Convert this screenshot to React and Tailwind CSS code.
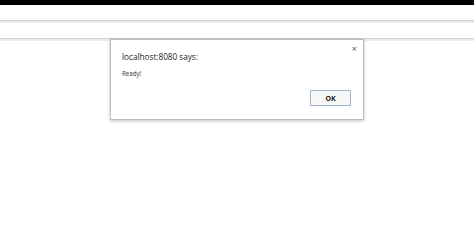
export default function App() {
  return (
    <div className="relative w-[474px] h-[223px] overflow-hidden bg-white" style={{ fontFamily: '"Open Sans", "Noto Sans", sans-serif' }}>
      <div className="h-[5px] bg-black" />
      <div className="mt-[15px] h-[3px] border-t border-[#d0d0d0] bg-[#ececec]" />
      <div className="mt-[15px] h-[3px] border-t border-[#d0d0d0] bg-[#ececec]" />

      <div className="absolute left-[110px] top-[39px] w-[254px] h-[81px] bg-white border border-[#bdbdbd] shadow-[0_1px_3px_rgba(0,0,0,0.25)]">
        <div className="absolute right-[6px] top-[4px] text-[9px] leading-none text-[#555]">×</div>
        <div className="pl-[11px] pt-[11px] text-[8.2px] leading-[11px] text-[#222]">localhost:8080 says:</div>
        <div className="pl-[11px] pt-[8px] text-[6.2px] leading-[8px] text-[#333]">Ready!</div>
        <div className="flex justify-end pr-[12px] pt-[12px]">
          <button className="w-[41px] h-[16px] border border-[#9fb5cf] bg-[#f7f7f7] text-[7px] font-bold text-[#222] leading-none">OK</button>
        </div>
      </div>
    </div>
  );
}
